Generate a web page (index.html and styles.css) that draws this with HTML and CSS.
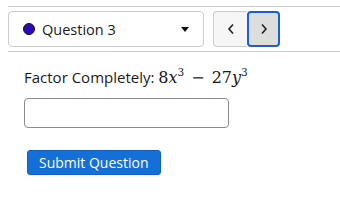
FILE: index.html
```html
<!DOCTYPE html>
<html lang="en">
  <head>
    <meta charset="UTF-8" />
    <title>Question 3</title>
    <link rel="stylesheet" href="styles.css">
  </head>
  <body>
    <nav class="question-nav">
      <div class="question-select">
        <span class="status-dot"></span>
        <span class="question-label">Question 3</span>
        <span class="caret"></span>
      </div>
      <div class="nav-buttons">
        <button class="nav-btn prev" aria-label="Previous">
          <svg width="8" height="12" viewBox="0 0 8 12"><path d="M6 1.5 L2 6 L6 10.5" fill="none" stroke="#222" stroke-width="1.6"/></svg>
        </button>
        <button class="nav-btn next active" aria-label="Next">
          <svg width="8" height="12" viewBox="0 0 8 12"><path d="M2 1.5 L6 6 L2 10.5" fill="none" stroke="#222" stroke-width="1.6"/></svg>
        </button>
      </div>
    </nav>

    <main class="question">
      <p class="prompt">
        Factor Completely:
        <span class="math">8<i>x</i><sup>3</sup><span class="op">−</span>27<i>y</i><sup>3</sup></span>
      </p>
      <input class="answer" type="text" />
      <div class="actions">
        <button class="submit">Submit Question</button>
      </div>
    </main>
  </body>
</html>
```

FILE: styles.css
```css
body {
  margin: 0;
  font-family: "Open Sans", "Noto Sans", sans-serif;
  color: #1a1a1a;
  background: #ffffff;
}

.question-nav {
  display: flex;
  align-items: center;
  gap: 9px;
  margin: 6px 0 0 8px;
  padding: 4px 0;
  border-top: 1px solid #cccccc;
  border-bottom: 1px solid #cccccc;
}

.question-select {
  box-sizing: border-box;
  width: 196px;
  height: 36px;
  display: flex;
  align-items: center;
  padding: 0 10px 0 14px;
  border: 1px solid #cccccc;
  border-radius: 4px;
}

.status-dot {
  width: 10px;
  height: 10px;
  border-radius: 50%;
  background: #2d0ab8;
  border: 1px solid #111;
  margin-right: 7px;
}

.question-label {
  flex: 1;
  font-size: 14.5px;
}

.caret {
  width: 0;
  height: 0;
  border-left: 4px solid transparent;
  border-right: 4px solid transparent;
  border-top: 5px solid #111;
  margin-right: 4px;
}

.nav-buttons {
  display: flex;
}

.nav-btn {
  box-sizing: border-box;
  height: 36px;
  width: 34px;
  display: flex;
  align-items: center;
  justify-content: center;
  padding: 0;
  background: #f6f6f6;
  border: 1px solid #cccccc;
}

.nav-btn.prev {
  border-radius: 4px 0 0 4px;
  border-right: none;
}

.nav-btn.next {
  width: 33px;
  border-radius: 0 4px 4px 0;
}

.nav-btn.active {
  background: #dddddd;
  border: 2px solid #1b5fd0;
  border-radius: 4px;
}

.question {
  padding: 0 24px;
}

.prompt {
  margin: 15px 0 11px;
  font-size: 15px;
}

.math {
  font-family: "DejaVu Serif", "Liberation Serif", serif;
  font-size: 16px;
}

.math i {
  font-style: italic;
}

.math sup {
  font-size: 10.5px;
  vertical-align: 7px;
  line-height: 0;
}

.math .op {
  margin: 0 7px;
}

.answer {
  box-sizing: border-box;
  width: 205px;
  height: 30px;
  border: 1px solid #8a8a8a;
  border-radius: 4px;
  margin: 0;
  display: block;
}

.actions {
  margin-top: 22px;
  padding-left: 3px;
}

.submit {
  box-sizing: border-box;
  height: 25px;
  padding: 0 11px;
  font-family: "Open Sans", "Noto Sans", sans-serif;
  font-size: 14px;
  color: #ffffff;
  background: #1470d8;
  border: 1px solid #0f62c4;
  border-radius: 3px;
}
```
